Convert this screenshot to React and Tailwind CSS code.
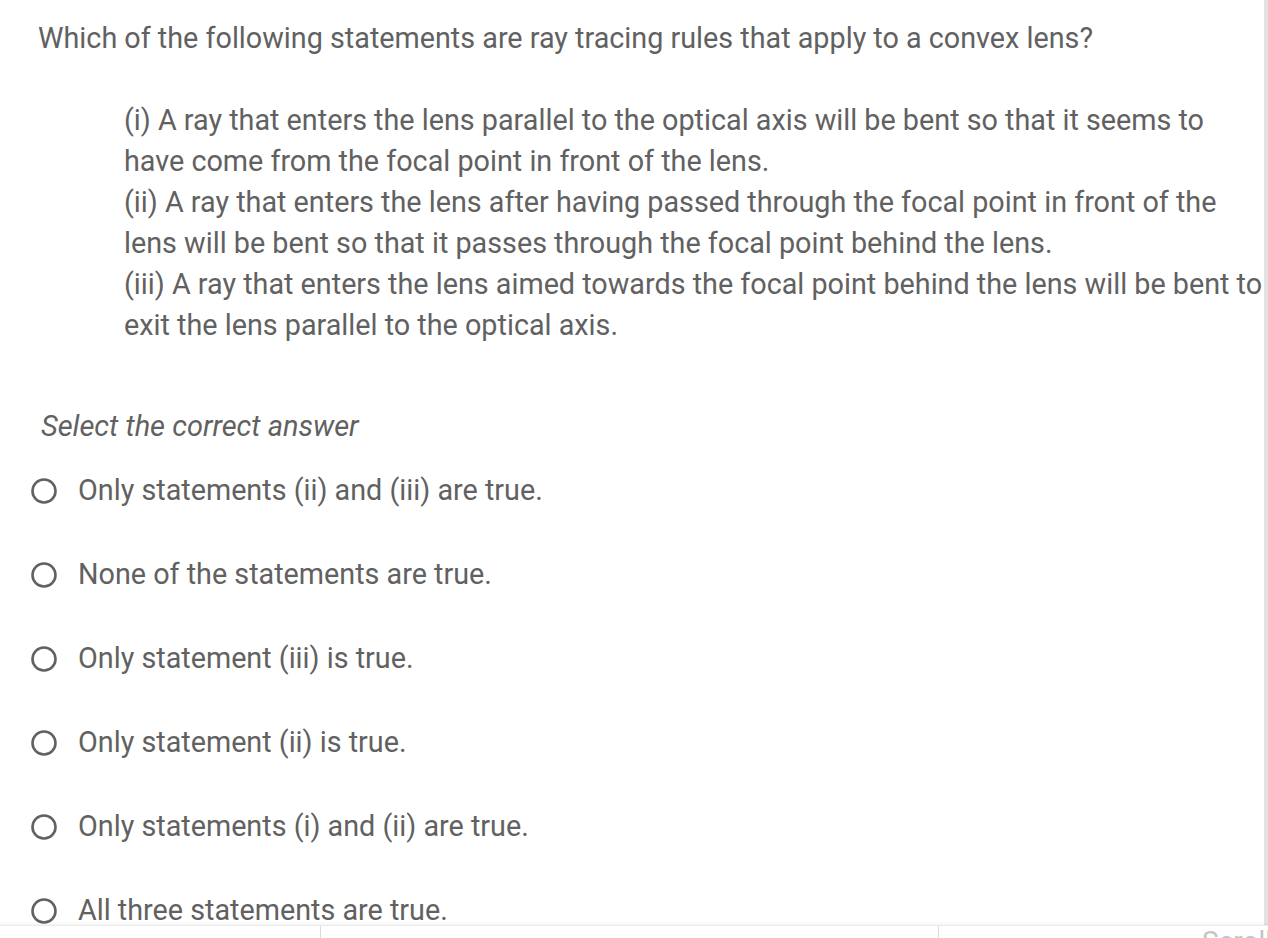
import React from 'react';

const options = [
  'Only statements (ii) and (iii) are true.',
  'None of the statements are true.',
  'Only statement (iii) is true.',
  'Only statement (ii) is true.',
  'Only statements (i) and (ii) are true.',
  'All three statements are true.',
];

const Radio = () => (
  <svg width="28" height="28" viewBox="0 0 28 28" className="shrink-0">
    <circle cx="14" cy="14" r="11.5" fill="none" stroke="#616161" strokeWidth="2.6" />
  </svg>
);

export default function App() {
  return (
    <div className="h-[938px] w-full overflow-hidden bg-white text-[#616161] font-['Roboto',sans-serif] flex flex-col">
      <div className="h-[925px] shrink-0 flex overflow-hidden">
        <div className="flex-1 overflow-hidden">
          <p className="pl-[38px] pt-[18px] text-[28.75px] leading-[41px] whitespace-nowrap">
            Which of the following statements are ray tracing rules that apply to a convex lens?
          </p>
          <p className="pl-[124px] mt-[41px] text-[28.75px] leading-[41px]">
            (i) A ray that enters the lens parallel to the optical axis will be bent so that it seems to have come from the focal point in front of the lens.
            <br />
            (ii) A ray that enters the lens after having passed through the focal point in front of the lens will be bent so that it passes through the focal point behind the lens.
            <br />
            (iii) A ray that enters the lens aimed towards the focal point behind the lens will be bent to exit the lens parallel to the optical axis.
          </p>
          <p className="pl-[41px] mt-[60px] text-[29px] leading-[41px] italic">Select the correct answer</p>
          <ul className="mt-[2px]">
            {options.map((o) => (
              <li key={o} className="h-[84px] flex items-center pl-[30px] gap-[20px] text-[28.75px]">
                <Radio />
                <span>{o}</span>
              </li>
            ))}
          </ul>
        </div>
        <div className="w-[4px] bg-[#e3e3e3]" />
      </div>
      <div className="h-[13px] shrink-0 overflow-hidden border-t border-[#ececec] shadow-[0_-1px_3px_rgba(0,0,0,0.06)] flex">
        <div className="w-[321px] border-r border-[#dcdcdc]" />
        <div className="w-[618px] border-r border-[#dcdcdc]" />
        <div className="flex-1 pl-[263px] overflow-hidden">
          <span className="block text-[28px] leading-none text-[#c4c4c4] mt-[2px] whitespace-nowrap">Scroll</span>
        </div>
      </div>
    </div>
  );
}
